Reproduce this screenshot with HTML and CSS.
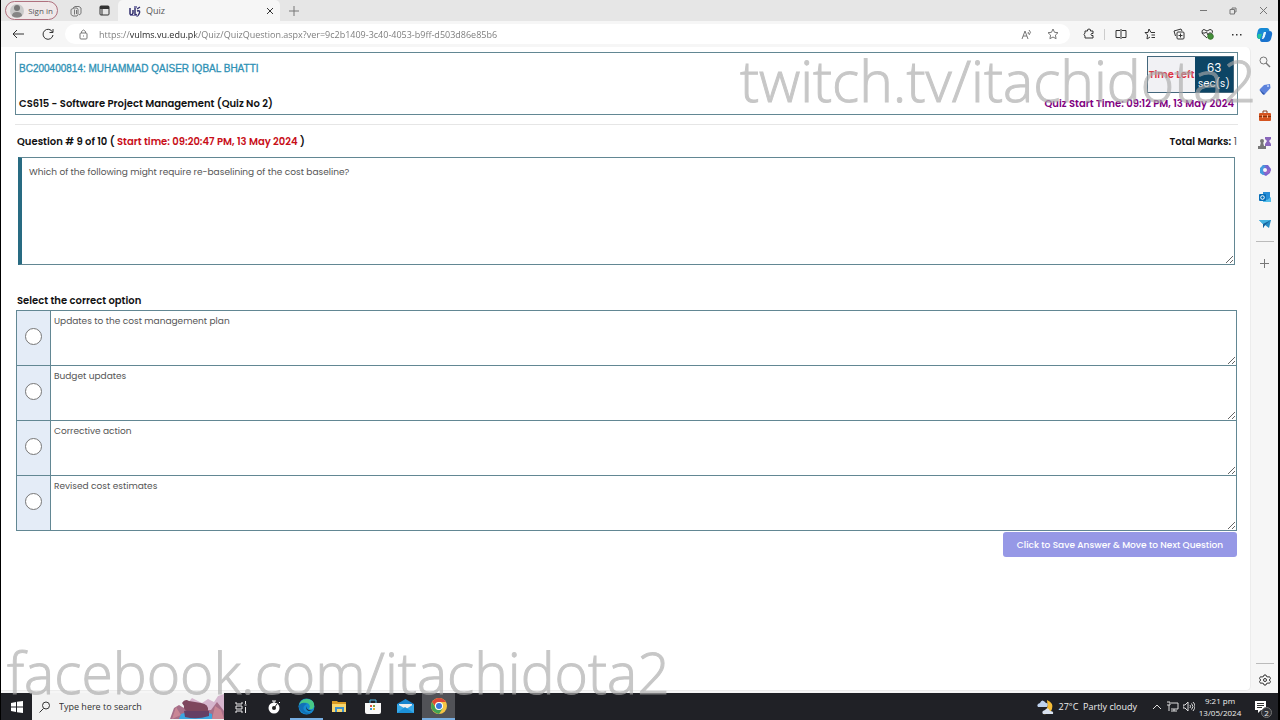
FILE: index.html
```html
<!DOCTYPE html>
<html lang="en">
<head>
<meta charset="utf-8">
<title>Quiz</title>
<link rel="stylesheet" href="styles.css">
</head>
<body>
<div class="desktop">
  <div class="tabstrip">
    <button class="profile"><svg width="14" height="14" viewBox="0 0 14 14"><circle cx="7" cy="7" r="7" fill="#c9c9c9"/><circle cx="7" cy="4" r="3" fill="#777"/><path d="M2 12Q2 8 7 8t5 4Q7 15 2 12" fill="#858585"/></svg>Sign in</button>
    <button class="icon" aria-label="Workspaces"><svg width="12" height="12" viewBox="0 0 12 12" class="line"><path d="M1 4.500 4 3h3l1 1.500v5L7 11H3L1 9.500zM3 3l2-1.500h4L11 3v5.500L9 10M4.500 4.500v5M6.500 5v4"/></svg></button>
    <button class="icon" aria-label="Tab actions"><svg width="11" height="11" viewBox="0 0 11 11" class="dark"><rect x="1" y="1" width="9" height="9" rx="1"/><path d="M1 2.500h9" stroke-width="3"/><path d="M3 4v6"/></svg></button>
    <div class="tab"><svg width="12" height="12" viewBox="0 0 12 12"><path d="M1 3v6q2 2 3-1V5M6 3v7M8 4l3-2M8 6q4-1 2 3t-3 0" fill="none" stroke="#33316f" stroke-width="1.500"/><path d="M5 1h3v2H5zM1 10h8v1H1z" fill="#827fae"/></svg><span>Quiz</span><button class="close" aria-label="Close tab"><svg width="6" height="6" viewBox="0 0 6 6" class="dark"><path d="m0 0 6 6M6 0 0 6"/></svg></button></div>
    <button class="icon" aria-label="New tab"><svg width="10" height="10" viewBox="0 0 10 10" class="line"><path d="M5 0v10M0 5h10"/></svg></button>
    <div class="window-controls">
      <button aria-label="Minimize"><svg width="7" height="7" viewBox="0 0 7 7" class="line"><path d="M0 3.500h7"/></svg></button>
      <button aria-label="Restore"><svg width="8" height="8" viewBox="0 0 8 8" class="line"><path d="M1 2.500h4.500V7H1zM3 2V1h4v4H6"/></svg></button>
      <button aria-label="Close"><svg width="7" height="7" viewBox="0 0 7 7" class="line"><path d="m0 0 7 7M7 0 0 7"/></svg></button>
    </div>
  </div>
  <div class="browser">
    <div class="view">
      <div class="toolbar">
        <button class="nav" aria-label="Back"><svg width="12" height="10" viewBox="0 0 12 10" class="dark"><path d="M12 5H1M5 1 1 5l4 4"/></svg></button>
        <button class="nav" aria-label="Refresh"><svg width="12" height="12" viewBox="0 0 12 12" class="dark"><path d="M10.500 4A5 5 0 1 0 11 7M11 1v3.500H7.500"/></svg></button>
        <form class="address">
          <svg width="9" height="11" viewBox="0 0 9 11" class="line"><rect x="1" y="4" width="7" height="6" rx="1"/><path d="M2.500 4V2.500q2-3 4 0V4M4.500 6.500v1"/></svg>
          <input class="url" type="text" aria-label="Address" value="https://vulms.vu.edu.pk/Quiz/QuizQuestion.aspx?ver=9c2b1409-3c40-4053-b9ff-d503d86e85b6">
          <button type="button" class="nav" aria-label="Read aloud"><svg width="12" height="11" viewBox="0 0 12 11" class="line"><path d="m1 10 3-8 3 8M2 7h4M7 3q1 1 0 2M8 1q3 2 0 5"/></svg></button>
          <button type="button" class="nav" aria-label="Favorite"><svg width="12" height="12" viewBox="0 0 12 12" class="line"><path d="m6 1 1.500 3.300 3.500.4-2.600 2.400.7 3.600L6 9l-3.100 1.700.7-3.600L1 4.700l3.500-.4z"/></svg></button>
        </form>
        <button class="tool" aria-label="Extensions"><svg width="12" height="12" viewBox="0 0 12 12" class="dark"><path d="M2 3h2.500q-.5-2 1.500-2t1.500 2H10v2.500q-2-.5-2 1t2 1V10H2V8Q0 6.500 2 5z"/></svg></button>
        <span class="split"></span>
        <button class="tool" aria-label="Split screen"><svg width="12" height="12" viewBox="0 0 12 12" class="dark"><path d="M5 2.500H1v7h4M7 2.500h4v7H7M6 1v10"/></svg></button>
        <button class="tool" aria-label="Favorites"><svg width="12" height="12" viewBox="0 0 12 12" class="dark"><path d="M11 4.500H7L5 1 4 4.500H1L3.500 7 3 11l3-2M7.500 7H11M7.500 9.500H11"/></svg></button>
        <button class="tool" aria-label="Collections"><svg width="12" height="12" viewBox="0 0 12 12" class="dark"><rect x="4" y="4" width="7" height="7" rx="1"/><path d="M2.500 8 1 3l7-2 1 2M7.500 5.500v4M5.500 7.500h4"/></svg></button>
        <button class="tool" aria-label="Browser essentials"><svg width="13" height="12" viewBox="0 0 13 12" class="dark"><path d="M6 10 1.500 6Q0 2 3 1.500L6 3l3-1.500Q13 2 10.500 6M1 5h3l1.500-1L7 7l1-2h2"/><circle cx="9.500" cy="8.500" r="2.800" fill="#439039" stroke="#39762f"/></svg></button>
        <button class="tool" aria-label="Settings and more"><svg width="11" height="3" viewBox="0 0 11 3"><path d="M1 1h1.500v1.500H1zM5 1h1.500v1.500H5zM9 1h1.500v1.500H9z" fill="#333"/></svg></button>
      </div>
      <main class="page">
        <header class="quiz-head">
          <div class="titles"><span class="student">BC200400814: MUHAMMAD QAISER IQBAL BHATTI</span><strong>CS615 - Software Project Management (Quiz No 2)</strong></div>
          <div class="timing">
            <div class="timer"><strong>Time Left</strong><span class="seconds"><b>63</b>sec(s)</span></div>
            <strong class="started">Quiz Start Time: 09:12 PM, 13 May 2024</strong>
          </div>
        </header>
        <hr class="rule">
        <div class="question-row"><label for="question">Question # 9 of 10 ( <span class="start">Start time: 09:20:47 PM, 13 May 2024</span> )</label><span><strong>Total Marks:</strong> 1</span></div>
        <textarea id="question" class="question" readonly>Which of the following might require re-baselining of the cost baseline?</textarea>
        <h2 class="prompt">Select the correct option</h2>
        <table class="options">
          <tr><td class="pick"><input type="radio" name="answer" aria-labelledby="o1"></td><td><textarea id="o1" aria-label="Updates to the cost management plan" readonly>Updates to the cost management plan</textarea></td></tr>
          <tr><td class="pick"><input type="radio" name="answer" aria-labelledby="o2"></td><td><textarea id="o2" aria-label="Budget updates" readonly>Budget updates</textarea></td></tr>
          <tr><td class="pick"><input type="radio" name="answer" aria-labelledby="o3"></td><td><textarea id="o3" aria-label="Corrective action" readonly>Corrective action</textarea></td></tr>
          <tr><td class="pick"><input type="radio" name="answer" aria-labelledby="o4"></td><td><textarea id="o4" aria-label="Revised cost estimates" readonly>Revised cost estimates</textarea></td></tr>
        </table>
        <button class="save">Click to Save Answer &amp; Move to Next Question</button>
      </main>
    </div>
    <aside class="sidebar">
      <button aria-label="Copilot"><svg width="17" height="16" viewBox="0 0 17 16"><path d="M5 1h6q2 0 2.500 3L11 5H8L6 12H4Q0 12 1 7l1-4q1-2 3-2" fill="#168ad5"/><path d="M13 4q4 0 3 4l-1 4q-1 3-4 3H6q-2 0-2-3h3q1 0 2-3l1-4q1-1 3-1" fill="#1973ce"/><path d="M2 7h4L4 12Q0 12 2 7" fill="#25c49b"/><path d="M8 5h2l-1.500 5h-2z" fill="#dff6ff"/></svg></button>
      <button aria-label="Search"><svg width="12" height="12" viewBox="0 0 12 12" class="line"><circle cx="4.500" cy="4.500" r="3.500"/><path d="m7 7 4 4" stroke-width="1.500"/></svg></button>
      <button aria-label="Shopping"><svg width="12" height="12" viewBox="0 0 12 12"><path d="m1 6 4-4 6-1 .5 4L6 11q-1 1-2 0L1 8Q0 7 1 6" fill="#5d83dc"/><path d="m1 7 5 4-1 .5q-1 .5-2-1z" fill="#345bae"/><circle cx="9" cy="3" r="1" fill="#c8d9ff"/></svg></button>
      <button aria-label="Tools"><svg width="12" height="12" viewBox="0 0 12 12"><path d="M4 3V1h4v2" fill="none" stroke="#873b1e"/><rect y="3" width="12" height="8" rx="1" fill="#d45420"/><path d="M0 6h12v1H0z" fill="#87320e"/><path d="M3 5h1v3H3zM8 5h1v3H8z" fill="#f5b38a"/></svg></button>
      <button aria-label="Games"><svg width="13" height="12" viewBox="0 0 13 12"><path d="M7 0h6v2l-2 2 2 3v2H7V7l2-3-2-2z" fill="#8967bb"/><circle cx="4" cy="4" r="2" fill="#777"/><path d="M3 5h2l1 4h2v3H0V9h2z" fill="#777"/></svg></button>
      <button aria-label="Microsoft 365"><svg width="12" height="12" viewBox="0 0 12 12"><path d="m4 1 5 0 3 4-1 4-4 3-4-2-1-4z" fill="#7564cf"/><path d="M4 1 1 4v5l3 2 2-1-2-2V5l3-3z" fill="#449bdd"/><path d="m5 10 5-1 2-3-3-1-2 3z" fill="#9965c7"/><circle cx="6" cy="6" r="2" fill="#f7f7f7"/></svg></button>
      <button aria-label="Outlook"><svg width="12" height="12" viewBox="0 0 12 12"><path d="M4 1h7v10H4z" fill="#278dd6"/><path d="m4 7 4 2 4-3v5H4z" fill="#55bde9"/><rect y="3" width="7" height="7" rx="1" fill="#086fb8"/><circle cx="3.500" cy="6.500" r="1.800" fill="none" stroke="#fff"/></svg></button>
      <button aria-label="Drop"><svg width="12" height="12" viewBox="0 0 12 12"><path d="M0 2h12l-2 8-4-3-2 3V6z" fill="#238bc5"/><path d="M12 2 5 7 0 2z" fill="#45b1df"/><path d="M4 6v4l2-3 6-5z" fill="#155f9a"/></svg></button>
      <hr>
      <button aria-label="Add"><svg width="9" height="9" viewBox="0 0 9 9" class="line"><path d="M4.500 0v9M0 4.500h9"/></svg></button>
      <div class="sidebar-foot"><hr><button aria-label="Settings"><svg width="12" height="12" viewBox="0 0 12 12" class="dark"><path d="M5 1h2l.5 1.500L9 3l1.500-.3 1 1.700L10.300 6l1.200 1.600-1 1.700L9 9l-1.500.5L7 11H5l-.5-1.500L3 9l-1.500.3-1-1.700L1.700 6 .5 4.400l1-1.700L3 3l1.500-.5z"/><circle cx="6" cy="6" r="1.500"/></svg></button></div>
    </aside>
  </div>
  <footer class="taskbar">
    <button class="start-menu" aria-label="Start"><svg width="12" height="12" viewBox="0 0 12 12"><path d="m0 2 5-1v4.500H0zM6 .8 12 0v5.500H6zM0 6.500h5V11l-5-1zM6 6.500h6V12l-6-.8z" fill="#fff"/></svg></button>
    <label class="search"><svg width="12" height="12" viewBox="0 0 12 12" class="dark"><circle cx="7" cy="4.500" r="3.500"/><path d="m4.500 7.500-4 4"/></svg><input type="text" placeholder="Type here to search" aria-label="Search"><svg width="54" height="25" viewBox="0 0 54 25"><path d="M14 13 22 4l10 5 6-4 6 3 4-6 6-2v25H9z" fill="#d6b6ce"/><path d="m0 25 4-11 5-3 8 5h24l6-8 7 9v8z" fill="#a76f89"/><path d="m2 25 4-12 5 8zM45 12l6 4 3 9H42z" fill="#c98695"/><path d="M11 20q16-7 31 0v5H9z" fill="#3ca6e0"/><path d="M14 17q13-5 25 0v5q-12 4-24 1z" fill="#653f64"/><path d="M12 9q3-5 7-2l12 2q8 1 7 8H18q-5-1-4-5z" fill="#7e465d"/></svg></label>
    <button class="app" aria-label="Task view"><svg width="12" height="12" viewBox="0 0 12 12" fill="none" stroke="#eee"><path d="M1 1v2h6V1M1 5h6v3H1zM1 12v-2h6v2M10.500 0v3M10.500 6v6M9.500 4h2"/></svg></button>
    <button class="app" aria-label="Clock"><svg width="14" height="14" viewBox="0 0 14 14"><circle cx="7" cy="8" r="5.500" fill="#fff"/><path d="M5 1h4M7 1v3M12 2l1 1" stroke="#fff"/><circle cx="7" cy="8" r="2" fill="#222"/><path d="m7 8 3-4" stroke="#222"/></svg></button>
    <button class="app open" aria-label="Edge"><svg width="17" height="17" viewBox="0 0 17 17"><circle cx="8.500" cy="8.500" r="8" fill="#168bd1"/><path d="M1 7Q3 0 10 1t6 8q-1 3-5 2 0-1 1-2-1-5-6-4T1 8" fill="#47c887"/><path d="M1 7q4-4 8-1-5 2-3 6t8 2Q8 19 3 13 0 10 1 7" fill="#1270b6"/><path d="M9 8q-1 3 2 4t4-1q-1 2-4 2-4-1-2-5" fill="#1d2026"/></svg></button>
    <button class="app" aria-label="File Explorer"><svg width="15" height="13" viewBox="0 0 15 13"><path d="M0 1h5l1 1h8v10H0z" fill="#d99b24"/><path d="M0 4h14v8H0z" fill="#f8d76d"/><path d="M3 12V7h9v5h-2V9H5v3z" fill="#3f93cc"/></svg></button>
    <button class="app" aria-label="Store"><svg width="16" height="16" viewBox="0 0 16 16"><path d="M5 4V1h6v3" fill="none" stroke="#50b8e1"/><path d="M0 4h16v9q0 2-2 2H2q-2 0-2-2z" fill="#f8f8f8"/><path d="M5 6h2v2H5z" fill="#df5238"/><path d="M8 6h2v2H8z" fill="#76a442"/><path d="M5 9h2v2H5z" fill="#329bd4"/><path d="M8 9h2v2H8z" fill="#e5b435"/></svg></button>
    <button class="app" aria-label="Mail"><svg width="17" height="15" viewBox="0 0 17 15"><path d="m0 5 8.500-5L17 5v9H0z" fill="#1683cc"/><path d="M2 5h13v5H2z" fill="#eee"/><path d="m0 5 9 5 8-5v9H0z" fill="#38a9e8"/><path d="m0 14 8-6 9 6z" fill="#1c91d8"/></svg></button>
    <button class="app open active" aria-label="Chrome"><svg width="16" height="16" viewBox="0 0 16 16"><circle cx="8" cy="8" r="8" fill="#f6c544"/><path d="M1 4q3-4 7-4t7 4H8q-4 0-4 4z" fill="#de4838"/><path d="M1 4Q-2 11 5 15l3 1 4-6-4 2q-3 0-4-3z" fill="#43a354"/><circle cx="8" cy="8" r="4" fill="#fff"/><circle cx="8" cy="8" r="3" fill="#3976dc"/></svg></button>
    <div class="tray">
      <button class="weather"><svg width="17" height="16" viewBox="0 0 17 16"><path d="M10 1q7 3 5 9t-9 5q6-2 4-14" fill="#f5bd39"/><path d="M1 8q-2-3 2-4 2-5 6 0 3 0 1 4z" fill="#bed2ee"/><path d="M6 15q-2-3 2-4 3-4 5 1 4 0 3 3z" fill="#d9e1ee"/></svg>27°C&nbsp; Partly cloudy</button>
      <button aria-label="Hidden icons"><svg width="8" height="5" viewBox="0 0 8 5" class="light"><path d="m0 5 4-4 4 4"/></svg></button>
      <button aria-label="Network"><svg width="12" height="11" viewBox="0 0 12 11" class="light"><path d="M4 2h7v6H4M7 8v2M4 10h6M0 1h3v3H0M2 4v6"/></svg></button>
      <button aria-label="Volume"><svg width="12" height="11" viewBox="0 0 12 11" class="light"><path d="M0 4h2l3-3v9L2 7H0zM7 4q1 1 0 3M8.500 2.500q3 3 0 6M10 1q4 4 0 9"/></svg></button>
      <button class="clock">9:21 pm<br>13/05/2024</button>
      <button class="notice" aria-label="2 notifications"><svg width="12" height="12" viewBox="0 0 12 12"><path d="M0 0h11v9H6l-3 3V9H0z" fill="#fff"/><path d="M2 2.500h7M2 4.500h7M2 6.500h5" stroke="#333"/></svg><span>2</span></button>
    </div>
  </footer>
  <div class="watermark top">twitch.tv/itachidota2</div>
  <div class="watermark bottom">facebook.com/itachidota2</div>
</div>
</body>
</html>
```
FILE: styles.css
```css
* { box-sizing: border-box; }
body { margin: 0; font-family: "Open Sans", sans-serif; font-size: 9px; color: #555; }
button, input, textarea { font: inherit; color: inherit; }
button { display: flex; align-items: center; justify-content: center; padding: 0; border: 0; background: none; white-space: nowrap; }
svg { flex: none; display: block; }
.line, .dark, .light { fill: none; stroke: #777; stroke-width: 1; }
.dark { stroke: #333; }
.light { stroke: #ddd; }
.desktop { position: relative; display: flex; flex-direction: column; min-height: 100vh; overflow: hidden; border: solid #000; border-width: 0 2px 0 1px; background: #f6f6f6; }
.tabstrip { display: flex; height: 21px; background: #e6e6e6; }
.profile { gap: 4px; height: 19px; width: 53px; margin: 1px 4px; border: 1px solid #b0707e; border-radius: 10px; background: #efe8e9; font-size: 8px; }
.tabstrip .icon { width: 28px; }
.tab { display: flex; align-items: center; gap: 5px; width: 162px; padding: 0 5px 0 11px; border-radius: 5px 5px 0 0; background: #f6f6f6; }
.close { width: 10px; height: 16px; margin-left: auto; }
.window-controls { display: flex; margin-left: auto; }
.window-controls button { width: 30px; }
.browser { flex: 1; display: flex; }
.view { flex: 1; display: flex; flex-direction: column; padding-bottom: 2px; }
.toolbar { display: flex; align-items: center; height: 26px; padding-left: 4px; }
.nav { width: 26px; height: 20px; margin-right: 4px; }
.address .nav { margin: 0; }
.address { flex: 1; display: flex; align-items: center; height: 20px; margin-right: 4px; padding: 0 4px 0 14px; border-radius: 10px; background: #fff; }
.url { flex: 1; min-width: 0; margin-left: 11px; padding: 0; border: 0; outline: 0; color: transparent; background: linear-gradient(90deg, #777 31px, #222 31px 96px, #777 96px) text; }
.tool { width: 29px; height: 20px; }
.toolbar > .tool:first-of-type { width: 24px; }
.split { width: 1px; height: 11px; margin: 0 1px; background: #ccc; }
.page { flex: 1; padding: 5px 12px 0 14px; border: 1px solid #ececec; border-width: 0 1px 1px 0; border-radius: 0 5px 5px 0; background: #fff; font-family: Poppins, Inter, sans-serif; font-size: 10px; line-height: 16px; }
.page strong, .page label { color: #111; font-weight: 600; }
.quiz-head { display: flex; justify-content: space-between; height: 63px; padding: 3px 3px 2px; border: 1px solid #628793; }
.titles { display: flex; flex-direction: column; justify-content: space-between; padding-top: 5px; }
.student { color: #2e91b5; font-family: "Liberation Sans", sans-serif; -webkit-text-stroke: 0.3px #2e91b5; }
.timing { display: flex; flex-direction: column; align-items: flex-end; }
.timer { display: flex; width: 87px; height: 38px; border: 1px solid #43677c; background: #f1f1f4; }
.page .timer strong { flex: 1; align-self: center; text-align: center; color: #dc3545; }
.seconds { width: 38px; padding-top: 3px; background: #0d4565; color: #fff; text-align: center; }
.seconds b { display: block; font-size: 12px; font-weight: 400; }
.page .started { margin-top: 3px; color: #800080; }
.rule { height: 1px; margin: 9px 0; border: 0; background: #e6e6e6; }
.question-row { display: flex; justify-content: space-between; padding: 0 1px 0 2px; }
.start, .page .started, .titles strong { font-weight: 600; }
.start { color: #c80e18; }
textarea { display: block; width: 100%; resize: both; outline: 0; border: 0; border-radius: 0; background: #fff; font-size: 9px; }
.question { width: calc(100% - 6px); height: 108px; margin: 7px 3px 0; padding: 6px 7px; border: 1px solid #628793; border-left: 4px solid #286b82; }
.prompt { margin: 28px 0 1px 2px; color: #111; font-size: 10px; font-weight: 600; }
.options { width: calc(100% - 2px); margin-left: 1px; border-collapse: collapse; }
.options td { height: 54px; padding: 0; border: 1px solid #628793; }
.options .pick { width: 34px; background: #e4ecf7; }
.pick input { appearance: none; display: block; width: 17px; height: 17px; margin: 0 auto 4px; border: 1px solid #777; border-radius: 50%; background: #fff; }
.options textarea { height: 54px; padding: 2px 3px; }
.save { width: 234px; height: 25px; margin: 1px 1px 0 auto; border-radius: 3px; background: #9698e6; color: #fff; font-size: 9px; font-weight: 500; }
.sidebar { display: flex; flex-direction: column; align-items: center; width: 27px; }
.sidebar button { width: 27px; height: 27px; }
.sidebar hr { width: 18px; height: 1px; margin: 4px 0 8px; border: 0; background: #bbb; }
.sidebar-foot { margin-top: auto; display: flex; flex-direction: column; align-items: center; }
.sidebar-foot hr { margin: 0 0 2px; }
.taskbar { display: flex; height: 27px; background: #202126; color: #eee; font-size: 10px; }
.start-menu { width: 31px; }
.search { display: flex; align-items: center; width: 192px; padding-left: 7px; background: #f2f2f2; }
.search input { flex: 1; min-width: 0; margin-left: 8px; padding: 0; border: 0; outline: 0; background: none; color: #444; font-size: 9px; }
.search input::placeholder { color: #333; opacity: 1; }
.app { width: 33px; border: solid transparent; border-width: 1px 0; }
.app.open { border-bottom: 2px solid #77aee2; }
.app.active { background: #515257; }
.tray { display: flex; margin-left: auto; }
.tray button { width: 16px; }
.tray .weather { width: auto; gap: 5px; margin-right: 12px; font-size: 9px; }
.tray .clock { width: 46px; font-size: 8px; line-height: 12px; text-align: center; }
.tray .notice { position: relative; width: 35px; }
.notice span { position: absolute; left: 18px; bottom: 2px; width: 11px; height: 11px; border: 1px solid #777; border-radius: 50%; background: #303136; font-size: 8px; line-height: 9px; }
.watermark { position: absolute; color: #aaa; opacity: 0.65; -webkit-text-stroke: 1px #aaa; font-family: "Open Sans", sans-serif; font-size: 57px; font-weight: 300; line-height: 64px; white-space: nowrap; pointer-events: none; }
.top { top: 48px; right: 22px; }
.bottom { left: 6px; bottom: 16px; }
```
